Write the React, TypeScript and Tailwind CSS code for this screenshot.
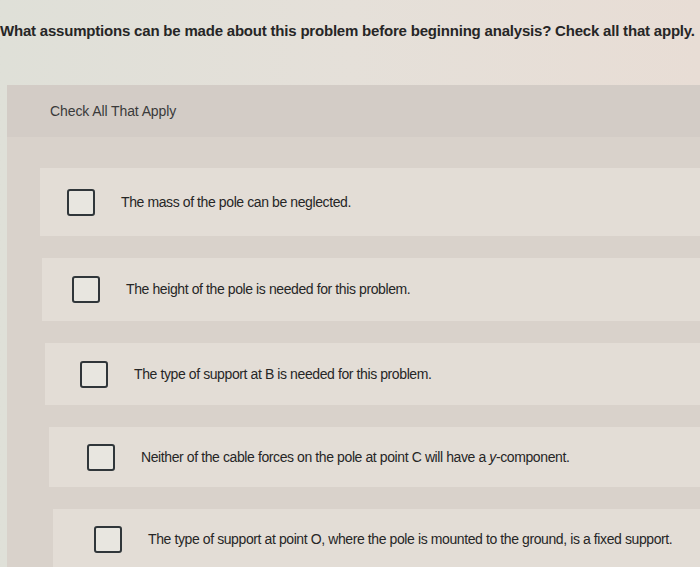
import React from 'react';

interface Choice {
    text: React.ReactNode;
    indent: string;
    height: string;
}

// Rows drift right a little as they go down, like the photo of the screen
const choices: Choice[] = [
    { text: 'The mass of the pole can be neglected.', indent: 'ml-[33px] pl-[27px]', height: 'h-[68px]' },
    { text: 'The height of the pole is needed for this problem.', indent: 'ml-[35px] pl-[30px]', height: 'h-[63px]' },
    { text: 'The type of support at B is needed for this problem.', indent: 'ml-[38px] pl-[35px]', height: 'h-[62px]' },
    {
        text: (
            <>
                Neither of the cable forces on the pole at point C will have a <i>y</i>-component.
            </>
        ),
        indent: 'ml-[42px] pl-[38px]',
        height: 'h-[60px]',
    },
    {
        text: 'The type of support at point O, where the pole is mounted to the ground, is a fixed support.',
        indent: 'ml-[46px] pl-[41px]',
        height: 'h-[60px]',
    },
];

const Checkbox: React.FC = () => (
    <div className="w-[28px] h-[27px] shrink-0 rounded-[3px] border-[2.5px] border-[#30363a] bg-[#e8e6e0]" />
);

export default function App() {
    return (
        <div
            className="w-[700px] h-[567px] overflow-hidden bg-gradient-to-r from-[#dfe0d8] via-[#e5e0d9] to-[#e8ddd5] text-[#2a2a2a]"
            style={{ fontFamily: '"Liberation Sans", Arial, sans-serif' }}
        >
            {/* Question */}
            <h1 className="pt-[21px] pl-0 text-[15px] leading-5 font-semibold tracking-[-0.2px] text-[#262626] whitespace-nowrap">
                What assumptions can be made about this problem before beginning analysis? Check all that apply.
            </h1>

            {/* Answer panel */}
            <div className="mt-[44px] ml-[7px] bg-[#d9d2cb]">
                <div className="h-[52px] flex items-center pl-[43px] bg-[#d3ccc6] text-[14px] tracking-[-0.1px] text-[#3a3a3a]">
                    Check All That Apply
                </div>
                <div className="flex flex-col gap-[22px] pt-[31px]">
                    {choices.map((c, i) => (
                        <div
                            key={i}
                            className={`${c.indent} ${c.height} flex items-center gap-[26px] bg-[#e3ddd6]`}
                        >
                            <Checkbox />
                            <span className="text-[14px] tracking-[-0.4px] text-[#262626] whitespace-nowrap">{c.text}</span>
                        </div>
                    ))}
                </div>
            </div>
        </div>
    );
}
